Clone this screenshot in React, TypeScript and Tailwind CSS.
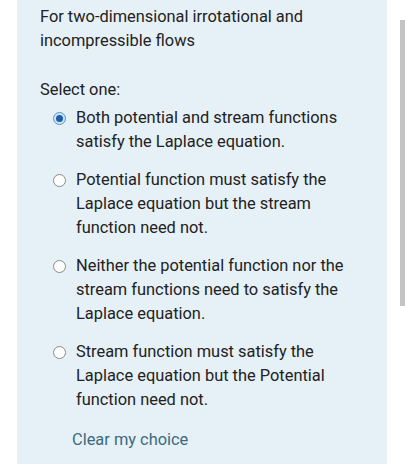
import React, { useState } from 'react';

const options = [
  'Both potential and stream functions satisfy the Laplace equation.',
  'Potential function must satisfy the Laplace equation but the stream function need not.',
  'Neither the potential function nor the stream functions need to satisfy the Laplace equation.',
  'Stream function must satisfy the Laplace equation but the Potential function need not.',
];

export default function App() {
  const [selected, setSelected] = useState<number | null>(0);

  return (
    <div className="relative w-[405px] h-[464px] bg-white overflow-hidden font-['Roboto',sans-serif] text-[16.4px] leading-[24px] text-[#222222]">
      <div className="ml-[17px] w-[370px] h-full bg-[#e6f0f7] pl-[23px] pr-4 pt-[5px]">
        <p className="w-[300px]">For two-dimensional irrotational and incompressible flows</p>

        <p className="mt-[25px]">Select one:</p>

        <div className="mt-[4px] flex flex-col gap-[14px]">
          {options.map((text, idx) => (
            <label key={idx} className="flex items-start cursor-pointer" onClick={() => setSelected(idx)}>
              <span className="w-[36px] shrink-0 flex justify-center pt-[6px] pl-[2px]">
                {selected === idx ? (
                  <span className="w-[13px] h-[13px] rounded-full border border-[#5b93c7] bg-[#cfe3f5] flex items-center justify-center">
                    <span className="w-[7px] h-[7px] rounded-full bg-[#1c5fa8]" />
                  </span>
                ) : (
                  <span className="w-[13px] h-[13px] rounded-full border-[1.5px] border-[#8a8a8a] bg-white" />
                )}
              </span>
              <span className="w-[275px]">{text}</span>
            </label>
          ))}
        </div>

        <button className="mt-[16px] ml-[32px] text-[#3c6b7d]" onClick={() => setSelected(null)}>
          Clear my choice
        </button>
      </div>

      {/* scrollbar */}
      <div className="absolute right-0 top-[20px] w-[5px] h-[286px] bg-[#c4c4c4]" />
    </div>
  );
}
